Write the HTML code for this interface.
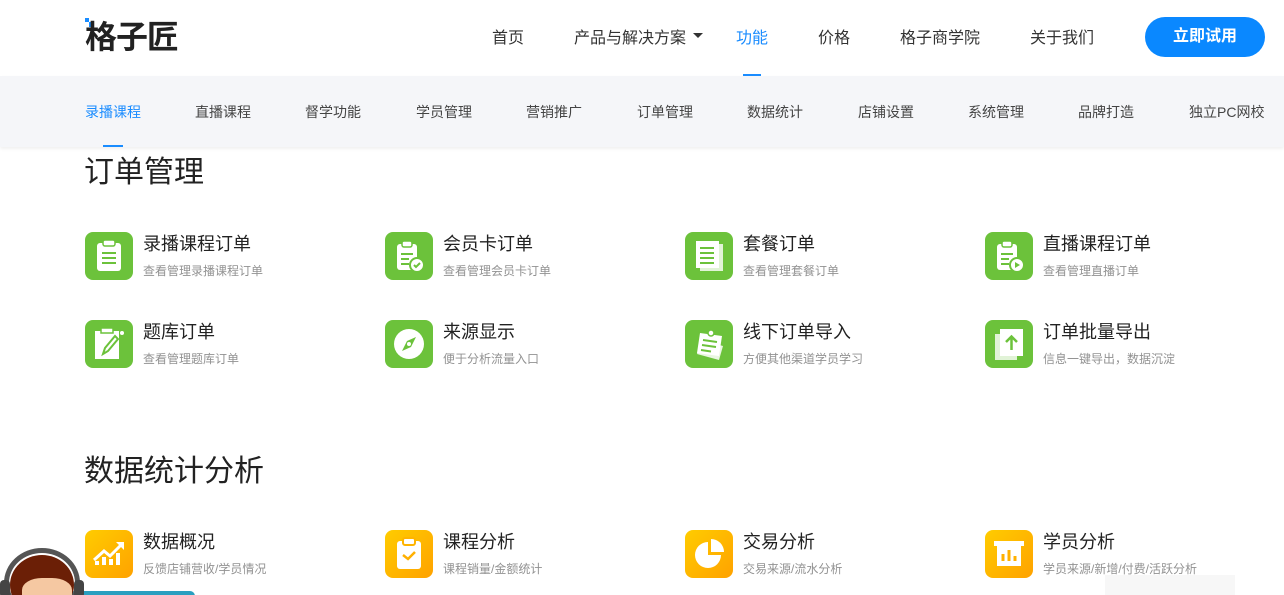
<!DOCTYPE html>
<html><head><meta charset="utf-8"><style>
*{margin:0;padding:0;box-sizing:border-box}
html{overflow:hidden;width:1284px;height:595px}
body{width:1284px;height:595px;overflow:hidden;background:#fff;font-family:"Liberation Sans","Noto Sans CJK SC",sans-serif;position:relative;color:#222}
.a{position:absolute;white-space:nowrap}
.nav{font-size:16px;color:#333;top:24px}
.sub{font-size:14px;color:#444;top:102px}
.ic{position:absolute;width:48px;height:48px;border-radius:8px;background:#6cc23b}
.ic.o{background:linear-gradient(135deg,#ffcc00,#ffa200)}
.ic svg{width:48px;height:48px}
.t{position:absolute;font-size:18px;color:#222;white-space:nowrap}
.s{position:absolute;font-size:12px;color:#929292;white-space:nowrap}
h2{position:absolute;font-weight:normal;font-size:30px;color:#222;left:84px}
</style></head><body>
<div class="a" style="left:0;top:0;width:1284px;height:76px;background:#fff"></div>
<div class="a" style="left:85px;top:18px;width:4px;height:4px;background:#1a8cff"></div>
<div class="a" style="left:89px;top:22px;width:5px;height:5px;background:#1a8cff"></div>
<div class="a" style="left:85px;top:17px;font-size:32px;font-weight:bold;color:#222;letter-spacing:-1px;line-height:40px">格子匠</div>
<div class="a nav" style="left:492px">首页</div>
<div class="a nav" style="left:574px">产品与解决方案</div>
<div class="a" style="left:693px;top:33px;width:0;height:0;border-left:5px solid transparent;border-right:5px solid transparent;border-top:5px solid #333"></div>
<div class="a nav" style="left:736px;color:#1a8cff">功能</div>
<div class="a" style="left:743px;top:74px;width:18px;height:2px;background:#1a8cff"></div>
<div class="a nav" style="left:818px">价格</div>
<div class="a nav" style="left:900px">格子商学院</div>
<div class="a nav" style="left:1030px">关于我们</div>
<div class="a" style="left:1145px;top:17px;width:120px;height:40px;border-radius:20px;background:#0a88ff;color:#fff;font-size:16px;font-weight:bold;text-align:center;line-height:40px">立即试用</div>
<div class="a" style="left:0;top:76px;width:1284px;height:71px;background:#f5f6f9;box-shadow:0 2px 3px rgba(0,0,0,.06)"></div>
<div class="a sub" style="left:85px;color:#1a8cff">录播课程</div>
<div class="a" style="left:103px;top:145px;width:20px;height:2px;background:#1a8cff"></div>
<div class="a sub" style="left:195px">直播课程</div>
<div class="a sub" style="left:305px">督学功能</div>
<div class="a sub" style="left:416px">学员管理</div>
<div class="a sub" style="left:526px">营销推广</div>
<div class="a sub" style="left:637px">订单管理</div>
<div class="a sub" style="left:747px">数据统计</div>
<div class="a sub" style="left:858px">店铺设置</div>
<div class="a sub" style="left:968px">系统管理</div>
<div class="a sub" style="left:1078px">品牌打造</div>
<div class="a sub" style="left:1189px">独立PC网校</div>

<h2 style="top:147px">订单管理</h2>
<h2 style="top:446px">数据统计分析</h2>

<div class="ic" style="left:85px;top:232px"><svg viewBox="0 0 48 48"><rect x="12" y="11" width="24" height="28" rx="3" fill="#fff"/><rect x="18" y="8" width="12" height="6" rx="2" fill="#fff" stroke="#6cc23b" stroke-width="1.5"/><path d="M17 21h14M17 26h14M17 31h14" stroke="#6cc23b" stroke-width="2"/></svg></div>
<div class="t" style="left:143px;top:230px">录播课程订单</div><div class="s" style="left:143px;top:262px">查看管理录播课程订单</div>
<div class="ic" style="left:385px;top:232px"><svg viewBox="0 0 48 48"><rect x="12" y="12" width="20" height="26" rx="3" fill="#fff"/><rect x="17" y="9" width="10" height="6" rx="2" fill="#fff" stroke="#6cc23b" stroke-width="1.5"/><path d="M16 22h12M16 27h8M16 32h8" stroke="#6cc23b" stroke-width="2"/><circle cx="32" cy="33" r="7" fill="#fff" stroke="#6cc23b" stroke-width="2"/><path d="M29 33l2 2 4-4" stroke="#6cc23b" stroke-width="2" fill="none"/></svg></div>
<div class="t" style="left:443px;top:230px">会员卡订单</div><div class="s" style="left:443px;top:262px">查看管理会员卡订单</div>
<div class="ic" style="left:685px;top:232px"><svg viewBox="0 0 48 48"><rect x="15" y="12" width="23" height="27" fill="#fff" opacity=".8"/><rect x="11" y="9" width="23" height="27" fill="#fff"/><path d="M15 16h14M15 21h14M15 26h14M15 31h14" stroke="#6cc23b" stroke-width="2"/></svg></div>
<div class="t" style="left:743px;top:230px">套餐订单</div><div class="s" style="left:743px;top:262px">查看管理套餐订单</div>
<div class="ic" style="left:985px;top:232px"><svg viewBox="0 0 48 48"><rect x="12" y="12" width="20" height="26" rx="3" fill="#fff"/><rect x="17" y="9" width="10" height="6" rx="2" fill="#fff" stroke="#6cc23b" stroke-width="1.5"/><path d="M16 22h12M16 27h8M16 32h8" stroke="#6cc23b" stroke-width="2"/><circle cx="32" cy="33" r="7" fill="#fff" stroke="#6cc23b" stroke-width="2"/><path d="M30 30v6l5-3z" fill="#6cc23b"/></svg></div>
<div class="t" style="left:1043px;top:230px">直播课程订单</div><div class="s" style="left:1043px;top:262px">查看管理直播订单</div>

<div class="ic" style="left:85px;top:320px"><svg viewBox="0 0 48 48"><rect x="10" y="11" width="24" height="28" fill="#fff"/><rect x="16" y="8" width="12" height="5" fill="#fff" stroke="#6cc23b" stroke-width="1.5"/><path d="M18 34l2-6 10-12 3 3-10 12z" fill="none" stroke="#6cc23b" stroke-width="2"/><circle cx="37" cy="13" r="2" fill="#fff"/></svg></div>
<div class="t" style="left:143px;top:318px">题库订单</div><div class="s" style="left:143px;top:350px">查看管理题库订单</div>
<div class="ic" style="left:385px;top:320px"><svg viewBox="0 0 48 48"><circle cx="24" cy="24" r="15" fill="#fff"/><path d="M31 17l-5 10-9 4 5-10z" fill="#6cc23b"/><circle cx="24" cy="24" r="2" fill="#fff"/></svg></div>
<div class="t" style="left:443px;top:318px">来源显示</div><div class="s" style="left:443px;top:350px">便于分析流量入口</div>
<div class="ic" style="left:685px;top:320px"><svg viewBox="0 0 48 48"><path d="M12 34l4-14 22 6-4 14z" fill="#fff" opacity=".85"/><path d="M15 13l22 3-3 20-22-3z" fill="#fff"/><circle cx="26" cy="13" r="3" fill="#fff" stroke="#6cc23b" stroke-width="1.5"/><path d="M18 20l14 2M17 25l14 2M16 30l10 1.5" stroke="#6cc23b" stroke-width="2"/></svg></div>
<div class="t" style="left:743px;top:318px">线下订单导入</div><div class="s" style="left:743px;top:350px">方便其他渠道学员学习</div>
<div class="ic" style="left:985px;top:320px"><svg viewBox="0 0 48 48"><rect x="10" y="14" width="22" height="26" fill="#fff" opacity=".8"/><rect x="15" y="9" width="23" height="27" fill="#fff"/><path d="M26.5 30V17M21 22l5.5-5.5 5.5 5.5" stroke="#6cc23b" stroke-width="2.5" fill="none"/></svg></div>
<div class="t" style="left:1043px;top:318px">订单批量导出</div><div class="s" style="left:1043px;top:350px">信息一键导出，数据沉淀</div>

<div class="ic o" style="left:85px;top:530px"><svg viewBox="0 0 48 48"><path d="M9 30l10-9 6 5 12-12" stroke="#fff" stroke-width="3" fill="none"/><path d="M31 12h8v8z" fill="#fff"/><path d="M10 35h4v-4h-4zM17 35h4v-8h-4zM24 35h4v-6h-4zM31 35h4v-12h-4z" fill="#fff"/></svg></div>
<div class="t" style="left:143px;top:528px">数据概况</div><div class="s" style="left:143px;top:560px">反馈店铺营收/学员情况</div>
<div class="ic o" style="left:385px;top:530px"><svg viewBox="0 0 48 48"><rect x="12" y="11" width="24" height="28" rx="3" fill="#fff"/><rect x="18" y="8" width="12" height="7" rx="2" fill="#fff" stroke="#ffb400" stroke-width="2"/><path d="M18 25l5 4 7-7" stroke="#ffb000" stroke-width="2.5" fill="none"/></svg></div>
<div class="t" style="left:443px;top:528px">课程分析</div><div class="s" style="left:443px;top:560px">课程销量/金额统计</div>
<div class="ic o" style="left:685px;top:530px"><svg viewBox="0 0 48 48"><path d="M23 12a13 13 0 1 0 13 13H23z" fill="#fff"/><path d="M26 9a13 13 0 0 1 13 13H26z" fill="#fff"/></svg></div>
<div class="t" style="left:743px;top:528px">交易分析</div><div class="s" style="left:743px;top:560px">交易来源/流水分析</div>
<div class="ic o" style="left:985px;top:530px"><svg viewBox="0 0 48 48"><rect x="9" y="11" width="30" height="5" fill="#fff"/><path d="M12 16h24v20H12z" fill="#fff"/><path d="M18 31v-7M24 31v-11M30 31v-5" stroke="#ffb000" stroke-width="3"/></svg></div>
<div class="t" style="left:1043px;top:528px">学员分析</div><div class="s" style="left:1043px;top:560px">学员来源/新增/付费/活跃分析</div>
<div class="a" style="left:1105px;top:575px;width:130px;height:20px;background:#f3f3f3;opacity:.7"></div>

<div class="a" style="left:70px;top:591px;width:125px;height:10px;border-radius:5px;background:#2a9fc0"></div>
<div class="a" style="left:4px;top:548px;width:76px;height:70px;border-radius:50%;border:5px solid #555"></div>
<div class="a" style="left:10px;top:555px;width:64px;height:60px;border-radius:50%;background:#6b1f06"></div>
<div class="a" style="left:22px;top:578px;width:50px;height:30px;border-radius:40% 40% 0 0;background:#f5c8a2"></div>
<div class="a" style="left:0;top:580px;width:10px;height:18px;border-radius:4px;background:#444"></div>
<div class="a" style="left:74px;top:580px;width:10px;height:18px;border-radius:4px;background:#444"></div>
</body></html>
